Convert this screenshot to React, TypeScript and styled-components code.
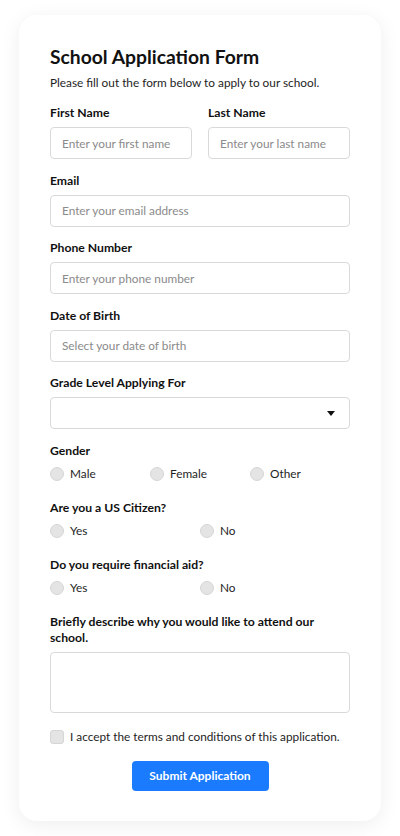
import React from 'react'
import styled, { createGlobalStyle } from 'styled-components'

const GlobalStyle = createGlobalStyle`
  * { box-sizing: border-box; }
  body {
    margin: 0;
    background: #fff;
    font-family: Lato, 'Noto Sans', sans-serif;
    color: #1c1c1c;
  }
`

const Page = styled.div`
  padding: 15px 19px;
`

const Card = styled.form`
  background: #fff;
  border-radius: 18px;
  padding: 30px 31px 30px;
  box-shadow: 0 4px 20px rgba(0, 0, 0, 0.07);
`

const Title = styled.h1`
  margin: 0 0 5px;
  font-size: 19.3px;
  line-height: 24px;
  font-weight: 700;
  color: #111;
`

const Subtitle = styled.p`
  margin: 0 0 13px;
  font-size: 11.8px;
  line-height: 18px;
  color: #1e1e1e;
`

const Row = styled.div`
  display: grid;
  grid-template-columns: 1fr 1fr;
  gap: 16px;
`

const Field = styled.div`
  margin-bottom: 13.6px;
`

const Label = styled.label`
  display: block;
  font-size: 12.2px;
  line-height: 16px;
  font-weight: 700;
  color: #111;
  margin-bottom: 6px;
`

const Input = styled.input`
  display: block;
  width: 100%;
  height: 32px;
  padding: 0 11px;
  border: 1px solid #d9d9d9;
  border-radius: 4px;
  font-family: inherit;
  font-size: 11.8px;
  color: #222;
  outline: none;
  &::placeholder { color: #8a8a8a; }
`

const SelectBox = styled.div`
  position: relative;
  height: 32px;
  border: 1px solid #d9d9d9;
  border-radius: 4px;
`

const Caret = styled.span`
  position: absolute;
  right: 14px;
  top: 13px;
  width: 0;
  height: 0;
  border-left: 4px solid transparent;
  border-right: 4px solid transparent;
  border-top: 5px solid #111;
`

const RadioGroup = styled.div<{ cols: number }>`
  display: grid;
  grid-template-columns: repeat(${p => p.cols}, 1fr);
  height: 18px;
  margin-bottom: 17px;
`

const Option = styled.label`
  display: flex;
  align-items: center;
  gap: 6px;
  font-size: 11.8px;
  line-height: 18px;
  color: #1e1e1e;
`

const Circle = styled.span`
  width: 14px;
  height: 14px;
  border-radius: 50%;
  background: #e4e4e4;
  border: 1px solid #d6d6d6;
  flex-shrink: 0;
`

const TextArea = styled.textarea`
  display: block;
  width: 100%;
  height: 61px;
  border: 1px solid #d9d9d9;
  border-radius: 4px;
  resize: none;
  font-family: inherit;
`

const CheckRow = styled.label`
  display: flex;
  align-items: center;
  gap: 6px;
  margin-top: 16px;
  font-size: 11.8px;
  line-height: 16px;
  color: #1e1e1e;
`

const Box = styled.span`
  width: 14px;
  height: 14px;
  border-radius: 3px;
  background: #e4e4e4;
  border: 1px solid #d6d6d6;
  flex-shrink: 0;
`

const Actions = styled.div`
  display: flex;
  justify-content: center;
  margin-top: 16px;
`

const Submit = styled.button`
  height: 30px;
  width: 137px;
  padding: 0;
  border: none;
  border-radius: 4px;
  background: #1a7bff;
  color: #fff;
  font-family: inherit;
  font-size: 12px;
  font-weight: 700;
`

const radios = [
  { label: 'Gender', name: 'gender', options: ['Male', 'Female', 'Other'] },
  { label: 'Are you a US Citizen?', name: 'citizen', options: ['Yes', 'No'] },
  { label: 'Do you require financial aid?', name: 'aid', options: ['Yes', 'No'] },
]

const App: React.FC = () => {
  return (
    <Page>
      <GlobalStyle />
      <Card onSubmit={e => e.preventDefault()}>
        <Title>School Application Form</Title>
        <Subtitle>Please fill out the form below to apply to our school.</Subtitle>

        <Row>
          <Field>
            <Label>First Name</Label>
            <Input placeholder="Enter your first name" />
          </Field>
          <Field>
            <Label>Last Name</Label>
            <Input placeholder="Enter your last name" />
          </Field>
        </Row>

        <Field>
          <Label>Email</Label>
          <Input placeholder="Enter your email address" />
        </Field>
        <Field>
          <Label>Phone Number</Label>
          <Input placeholder="Enter your phone number" />
        </Field>
        <Field>
          <Label>Date of Birth</Label>
          <Input placeholder="Select your date of birth" />
        </Field>
        <Field>
          <Label>Grade Level Applying For</Label>
          <SelectBox>
            <Caret />
          </SelectBox>
        </Field>

        {radios.map(g => (
          <div key={g.name}>
            <Label>{g.label}</Label>
            <RadioGroup cols={g.options.length}>
              {g.options.map(o => (
                <Option key={o}>
                  <Circle />
                  {o}
                </Option>
              ))}
            </RadioGroup>
          </div>
        ))}

        <div>
          <Label>Briefly describe why you would like to attend our school.</Label>
          <TextArea />
        </div>

        <CheckRow>
          <Box />
          I accept the terms and conditions of this application.
        </CheckRow>

        <Actions>
          <Submit type="submit">Submit Application</Submit>
        </Actions>
      </Card>
    </Page>
  )
}

export default App
